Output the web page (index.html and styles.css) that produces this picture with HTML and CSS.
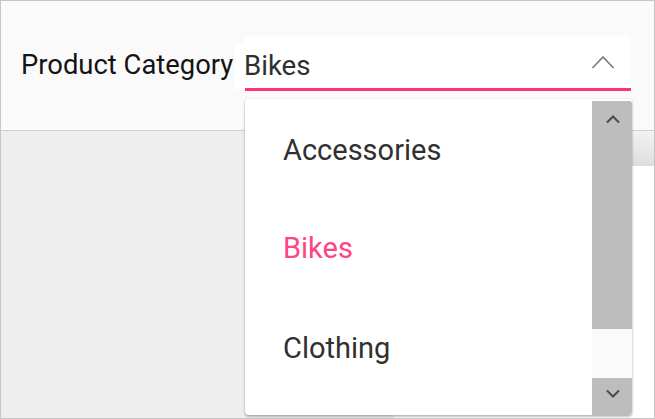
FILE: index.html
```html
<!DOCTYPE html>
<html lang="en">
<head>
<meta charset="utf-8">
<title>Product Category</title>
<link rel="stylesheet" href="styles.css">
</head>
<body>
<div class="frame">
  <div class="top">
    <label class="label">Product Category</label>
    <span class="gap"></span>
    <div class="input">
      <span class="value">Bikes</span>
      <svg class="caret" width="24" height="14" viewBox="0 0 24 14"><polyline points="1.5,13 12,2 22.5,13" fill="none" stroke="#7a7a7a" stroke-width="1.6"/></svg>
    </div>
  </div>
  <div class="lower">
    <div class="grid">
      <div class="grid-head"></div>
      <div class="grid-body"></div>
    </div>
  </div>
  <div class="popup">
    <ul class="list">
      <li class="item">Accessories</li>
      <li class="item selected">Bikes</li>
      <li class="item">Clothing</li>
    </ul>
    <div class="scrollbar">
      <div class="thumb">
        <svg width="16" height="10" viewBox="0 0 16 10"><polyline points="2,8.5 8,2.5 14,8.5" fill="none" stroke="#4a4a4a" stroke-width="2"/></svg>
      </div>
      <div class="track"></div>
      <div class="btn-down">
        <svg width="16" height="10" viewBox="0 0 16 10"><polyline points="2,1.5 8,7.5 14,1.5" fill="none" stroke="#4a4a4a" stroke-width="2"/></svg>
      </div>
    </div>
  </div>
</div>
</body>
</html>
```
FILE: styles.css
```css
* { box-sizing: border-box; }
html, body { margin: 0; padding: 0; }
body {
  font-family: Roboto, "Liberation Sans", sans-serif;
  background: #ffffff;
}
.frame {
  position: relative;
  width: 655px;
  height: 419px;
  border: 1px solid #c6c6c6;
  background: #eeeeee;
  display: flex;
  flex-direction: column;
  overflow: hidden;
}
.top {
  height: 130px;
  flex: none;
  background: #fafafa;
  border-bottom: 1px solid #d0d0d0;
  display: flex;
  align-items: flex-start;
  padding: 35px 0 0 20px;
}
.label {
  font-size: 27.4px;
  line-height: 30px;
  color: #141414;
  margin-top: 14px;
  white-space: nowrap;
}
.gap {
  width: 10px;
  height: 46px;
  margin: 8px 0 0 auto;
  background: #ffffff;
}
.input {
  width: 386px;
  height: 55px;
  margin-right: 23px;
  background: #ffffff;
  border-bottom: 3px solid #ff3378;
  border-radius: 4px 4px 0 0;
  display: flex;
  align-items: flex-start;
  justify-content: space-between;
  padding: 15px 16px 0 0;
}
.value {
  font-size: 27.6px;
  line-height: 30px;
  color: #2e2e2e;
  margin-left: -1px;
}
.caret { margin-top: 4px; }
.lower {
  flex: 1;
  display: flex;
  justify-content: flex-end;
}
.grid {
  width: 260px;
  display: flex;
  flex-direction: column;
}
.grid-head {
  height: 35px;
  background: linear-gradient(#f2f2f2, #dedede);
}
.grid-body {
  flex: 1;
  background: #ffffff;
}
.popup {
  position: absolute;
  left: 244px;
  top: 98px;
  width: 387px;
  height: 316px;
  background: #ffffff;
  border-radius: 4px;
  box-shadow: 0 1px 3px rgba(0,0,0,0.25), 0 2px 2px rgba(0,0,0,0.12);
  display: flex;
  overflow: hidden;
}
.list {
  list-style: none;
  margin: 0;
  padding: 0;
  flex: 1;
}
.item {
  height: 99.5px;
  display: flex;
  align-items: center;
  padding-left: 38px;
  font-size: 29px;
  color: #303030;
}
.item:first-child { padding-top: 3px; }
.item.selected { color: #ff4583; }
.scrollbar {
  width: 40px;
  display: flex;
  flex-direction: column;
  padding-top: 2px;
}
.thumb {
  height: 228px;
  background: #bdbdbd;
  border-radius: 0 3px 0 0;
  display: flex;
  justify-content: center;
  padding-top: 13px;
  padding-left: 1px;
}
.track {
  height: 49px;
  background: #fafafa;
}
.btn-down {
  flex: 1;
  background: #bdbdbd;
  display: flex;
  justify-content: center;
  align-items: center;
  padding-left: 1px;
  padding-bottom: 6px;
}
```
